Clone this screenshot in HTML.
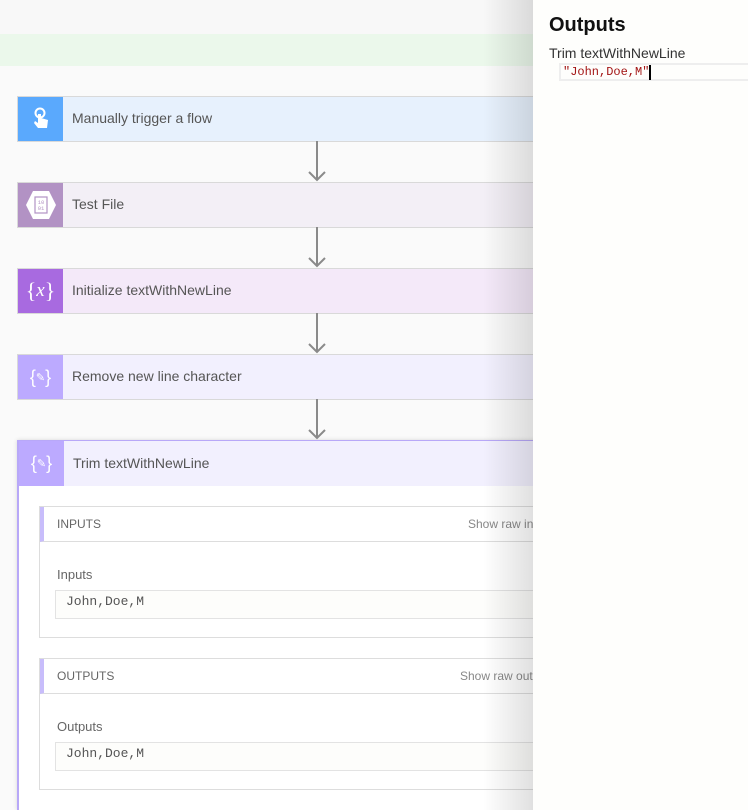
<!DOCTYPE html>
<html><head><meta charset="utf-8"><style>
*{margin:0;padding:0;box-sizing:border-box}
body{width:748px;height:810px;overflow:hidden;background:#f8f8f8;font-family:"Segoe UI","Liberation Sans",sans-serif;position:relative}
.banner{position:absolute;left:0;top:34px;width:748px;height:32px;background:#ebf8eb}
.canvas{position:absolute;left:0;top:66px;width:748px;height:744px;background:#fafafa}
.card{position:absolute;left:17px;width:540px;height:46px;border:1px solid #d9d9d9;}
.card .ic{position:absolute;left:0;top:0;width:45px;height:44px;display:flex;align-items:center;justify-content:center;color:#fff}
.card .t{position:absolute;left:54px;top:13px;font-size:14px;color:#555}
.arrow{position:absolute;left:307px;width:20px}
.mono{font-family:"Liberation Mono",monospace}
.box{position:absolute;left:39px;width:520px;height:132px;border:1px solid #ddd;background:#fff}
.box .hd{height:35px;border-bottom:1px solid #ddd;border-left:4px solid #c8bdfb;position:relative}
.box .hd span{position:absolute;left:13px;top:10px;font-size:12px;color:#666}
.box .hd i{position:absolute;top:10px;font-size:12px;color:#888;font-style:normal}
.box .lb{position:absolute;left:17px;top:60px;font-size:13px;color:#666}
.box .f{position:absolute;left:15px;top:83px;width:510px;height:29px;border:1px solid #e3e3e3;background:#fdfdfb;font-size:13px;color:#555;padding:3px 0 0 10px}
.shadow{position:absolute;left:483px;top:0;width:50px;height:810px;background:linear-gradient(to right,rgba(0,0,0,0),rgba(0,0,0,0.12))}
.panel{position:absolute;left:533px;top:0;width:215px;height:810px;background:#fefefc}
</style></head><body>
<div class="banner"></div>
<div class="canvas"></div>

<div class="card" style="top:96px;background:#e7f1fd">
<div class="ic" style="background:#5aa9fd"><svg width="22" height="24" viewBox="0 0 22 24"><circle cx="10" cy="6" r="4.5" fill="none" stroke="#fff" stroke-width="2"/><path d="M8 7 v9 l-3-2 -1 2 4 5 h9 l1-8 -7-2 v-4z" fill="#fff"/></svg></div>
<div class="t">Manually trigger a flow</div></div>

<div class="card" style="top:182px;background:#f3eff6">
<div class="ic" style="background:#b292c4"><svg width="32" height="30" viewBox="0 0 32 30"><path d="M8 1 H24 L31 15 L24 29 H8 L1 15Z" fill="#fff"/><rect x="10" y="7" width="12" height="16" fill="none" stroke="#b292c4" stroke-width="1.2"/><text x="16" y="14" font-size="5.5" text-anchor="middle" fill="#b292c4" font-family="Liberation Mono">10</text><text x="16" y="20" font-size="5.5" text-anchor="middle" fill="#b292c4" font-family="Liberation Mono">01</text></svg></div>
<div class="t">Test File</div></div>

<div class="card" style="top:268px;background:#f4e9f9">
<div class="ic" style="background:#a86ae0;font-family:'Liberation Serif',serif;font-size:22px"><span>{</span><i style="font-size:19px">x</i><span>}</span></div>
<div class="t">Initialize textWithNewLine</div></div>

<div class="card" style="top:354px;background:#f2f0fe">
<div class="ic" style="background:#bcaaff;font-size:18px">{<span style="font-size:11px">✎</span>}</div>
<div class="t">Remove new line character</div></div>

<div class="card" style="top:440px;height:370px;background:#fff;border:1px solid #b8a8f8;border-left:2px solid #b8a8f8;border-bottom:none;box-shadow:0 0 4px rgba(0,0,0,0.15)">
<div style="position:absolute;left:0;top:0;width:540px;height:45px;background:#f2f0fe"></div>
<div class="ic" style="background:#bcaaff;font-size:18px;height:45px">{<span style="font-size:11px">✎</span>}</div>
<div class="t" style="top:14px">Trim textWithNewLine</div></div>

<svg class="arrow" style="top:141px" width="20" height="41"><path d="M10 0V39 M2 31 L10 39 L18 31" fill="none" stroke="#8a8a8a" stroke-width="2"/></svg>
<svg class="arrow" style="top:227px" width="20" height="41"><path d="M10 0V39 M2 31 L10 39 L18 31" fill="none" stroke="#8a8a8a" stroke-width="2"/></svg>
<svg class="arrow" style="top:313px" width="20" height="41"><path d="M10 0V39 M2 31 L10 39 L18 31" fill="none" stroke="#8a8a8a" stroke-width="2"/></svg>
<svg class="arrow" style="top:399px" width="20" height="41"><path d="M10 0V39 M2 31 L10 39 L18 31" fill="none" stroke="#8a8a8a" stroke-width="2"/></svg>

<div class="box" style="top:506px"><div class="hd"><span>INPUTS</span><i style="left:424px">Show raw inputs</i></div>
<div class="lb">Inputs</div><div class="f mono">John,Doe,M</div></div>
<div class="box" style="top:658px"><div class="hd"><span>OUTPUTS</span><i style="left:416px">Show raw outputs</i></div>
<div class="lb">Outputs</div><div class="f mono">John,Doe,M</div></div>

<div class="shadow"></div>
<div class="panel">
<div style="position:absolute;left:16px;top:14px;font-size:20px;font-weight:600;color:#111">Outputs</div>
<div style="position:absolute;left:16px;top:45px;font-size:14px;color:#333">Trim textWithNewLine</div>
<div class="mono" style="position:absolute;left:26px;top:63px;width:200px;height:18px;border:2px solid #eee;border-right:none;font-size:12px;color:#a31515;padding-left:2px;line-height:14px">"John,Doe,M"<span style="display:inline-block;width:2px;height:15px;background:#000;vertical-align:top"></span></div>
</div>
</body></html>
